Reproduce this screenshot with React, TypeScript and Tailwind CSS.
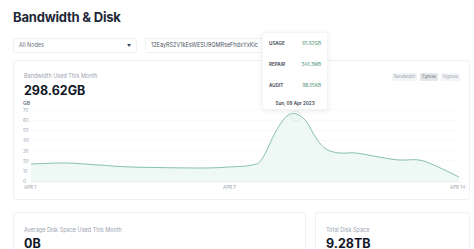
import React from "react";

const pts: [number, number][] = [
  [32, 163], [67, 162], [100, 164], [133, 166], [200, 167], [230, 166], [253, 164],
  [263, 158], [277, 130], [288, 115], [297, 113], [307, 120], [317, 137], [327, 148],
  [340, 152], [357, 152], [380, 156], [400, 159], [420, 159], [437, 165], [460, 176],
];

// catmull-rom -> cubic bezier
function smooth(p: [number, number][]) {
  let d = `M${p[0][0]},${p[0][1]}`;
  for (let i = 0; i < p.length - 1; i++) {
    const p0 = p[i - 1] || p[i];
    const p1 = p[i];
    const p2 = p[i + 1];
    const p3 = p[i + 2] || p2;
    const c1x = p1[0] + (p2[0] - p0[0]) / 6;
    const c1y = p1[1] + (p2[1] - p0[1]) / 6;
    const c2x = p2[0] - (p3[0] - p1[0]) / 6;
    const c2y = p2[1] - (p3[1] - p1[1]) / 6;
    d += ` C${c1x},${c1y} ${c2x},${c2y} ${p2[0]},${p2[1]}`;
  }
  return d;
}

const line = smooth(pts);
const area = `${line} L460,181 L32,181 Z`;

const ticks = [70, 60, 50, 40, 30, 20, 10, 0];

function Chart() {
  // svg covers page x 14..470, y 98..192
  return (
    <svg width="456" height="94" viewBox="14 98 456 94" className="block">
      {ticks.map((t, i) => {
        const y = 109 + i * 10.2;
        return (
          <g key={t}>
            {t !== 0 && <line x1="32" x2="462" y1={y} y2={y} stroke="#f5f5f6" strokeWidth="0.6" />}
            <text x="24" y={y + 1.8} fontSize="4.6" fill="#9ca3af">{t}</text>
          </g>
        );
      })}
      <text x="24" y="104" fontSize="5" fill="#6b7280" fontWeight="600">GB</text>
      <path d={area} fill="#eef8f4" />
      <path d={line} fill="none" stroke="#7ab9a2" strokeWidth="0.9" />
      <line x1="32" x2="462" y1="181" y2="181" stroke="#e5e7eb" strokeWidth="0.6" />
      <circle cx="297" cy="115" r="5" fill="none" stroke="#d3ebe2" strokeWidth="0.8" />
      <text x="25" y="188" fontSize="4.6" fill="#9ca3af">APR 1</text>
      <text x="224" y="188" fontSize="4.6" fill="#9ca3af">APR 7</text>
      <text x="451" y="188" fontSize="4.6" fill="#9ca3af">APR 14</text>
    </svg>
  );
}

export default function App() {
  return (
    <div
      className="relative w-[474px] h-[249px] overflow-hidden bg-white text-[#111827]"
      style={{ fontFamily: "Inter, 'Noto Sans', sans-serif" }}
    >
      <div className="pl-[13px] pr-[4px] pt-[9px]">
        <h1 className="text-[13px] font-bold leading-[16px] tracking-[-0.2px] text-[#1f2937]">
          Bandwidth &amp; Disk
        </h1>

        <div className="mt-[13px] flex gap-[8px]">
          <div className="flex h-[15px] w-[124px] items-center justify-between rounded-[2px] border border-[#f1f1f3] px-[5px] text-[5.5px] text-[#6b7280]">
            <span>All Nodes</span>
            <span className="text-[4px] text-[#374151]">▼</span>
          </div>
          <div className="flex h-[15px] w-[140px] items-center rounded-[2px] border border-[#f1f1f3] px-[5px] text-[5.5px] text-[#4b5563]">
            12EayRS2V1kEsWESU9QMRseFhdxYxKic
          </div>
        </div>

        <div className="mt-[7px] h-[140px] rounded-[3px] border border-[#f1f1f3] pt-[12px]">
          <div className="flex items-start justify-between pl-[10px] pr-[9px]">
            <div className="text-[5.5px] leading-[7px] text-[#9ca3af]">Bandwidth Used This Month</div>
            <div className="flex gap-[3px] text-[4.3px] text-[#9ca3af]">
              <span className="rounded-[1px] bg-[#f3f4f6] px-[2px] py-[1px]">Bandwidth</span>
              <span className="rounded-[1px] bg-[#e5e7eb] px-[2px] py-[1px] text-[#6b7280]">Egress</span>
              <span className="rounded-[1px] bg-[#f3f4f6] px-[2px] py-[1px]">Ingress</span>
            </div>
          </div>
          <div className="mt-[3px] pl-[10px] text-[12.5px] font-bold leading-[14px] text-[#111827]">298.62GB</div>
          <div className="-ml-px mt-px">
            <Chart />
          </div>
        </div>

        <div className="mt-[12px] flex gap-[9px]">
          <div className="h-[50px] w-[293px] rounded-[3px] border border-[#f1f1f3] px-[10px] pt-[14px]">
            <div className="text-[5.5px] leading-[7px] text-[#9ca3af]">Average Disk Space Used This Month</div>
            <div className="mt-[3px] text-[12.5px] font-bold leading-[14px]">0B</div>
          </div>
          <div className="h-[50px] flex-1 rounded-[3px] border border-[#f1f1f3] px-[10px] pt-[14px]">
            <div className="text-[5.5px] leading-[7px] text-[#9ca3af]">Total Disk Space</div>
            <div className="mt-[3px] text-[12.5px] font-bold leading-[14px]">9.28TB</div>
          </div>
        </div>
      </div>

      <div className="absolute left-[262px] top-[32px] w-[66px] h-[78px] rounded-[3px] bg-white shadow-[0_1px_6px_rgba(0,0,0,0.08)] border border-[#f3f4f6] px-[6px] pt-[8px] text-[4.6px]">
        <div className="flex justify-between font-semibold text-[#374151]">
          <span>USAGE</span><span className="font-normal text-[#3f8f73]">65.62GB</span>
        </div>
        <div className="mt-[14px] flex justify-between font-semibold text-[#374151]">
          <span>REPAIR</span><span className="font-normal text-[#3f8f73]">340.3MB</span>
        </div>
        <div className="mt-[14px] flex justify-between font-semibold text-[#374151]">
          <span>AUDIT</span><span className="font-normal text-[#3f8f73]">98.05KB</span>
        </div>
        <div className="mt-[11px] text-center font-semibold text-[#374151]">Sun, 09 Apr 2023</div>
      </div>
    </div>
  );
}
